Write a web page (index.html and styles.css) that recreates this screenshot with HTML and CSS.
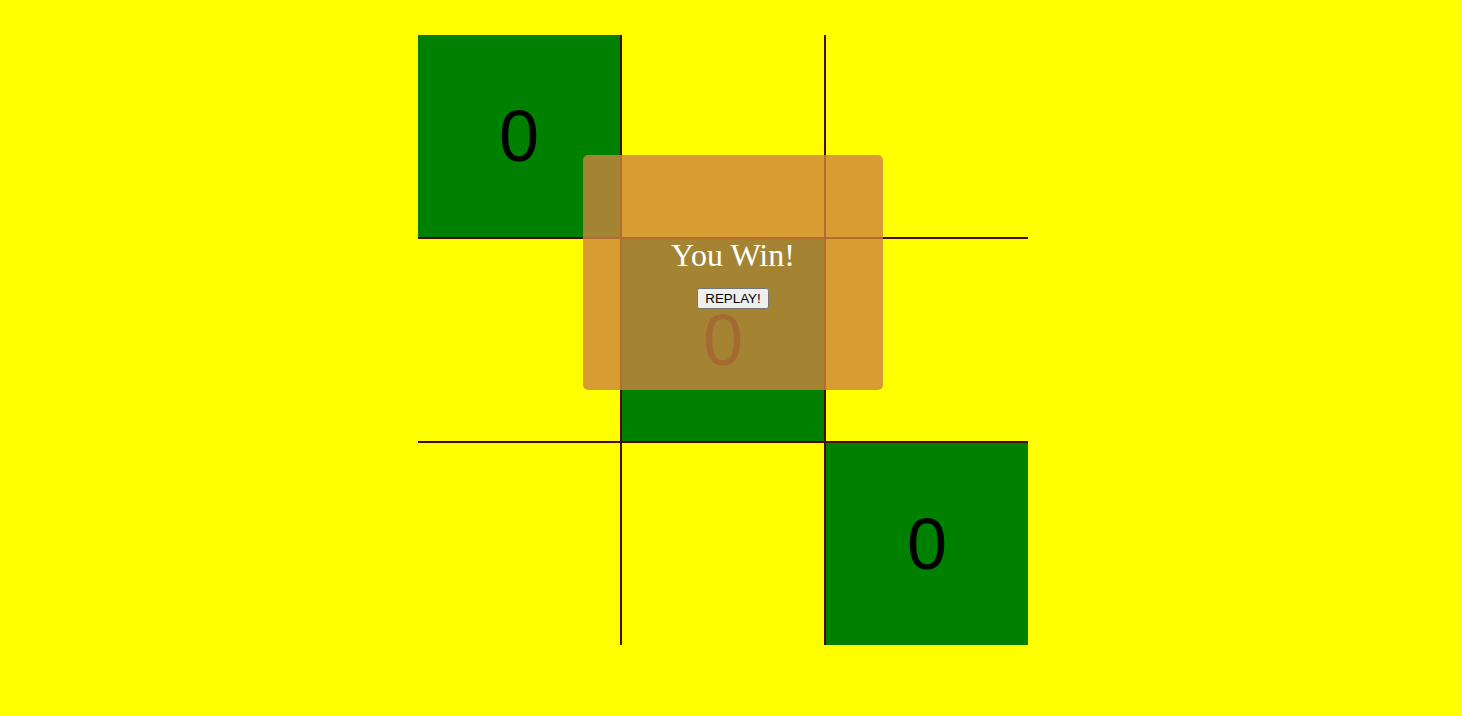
FILE: index.html
```html
<!DOCTYPE html>
<html lang="en">
<head>
<meta charset="utf-8">
<title>Tic Tac Toe</title>
<link rel="stylesheet" href="styles.css">
</head>
<body>
<main class="game">
  <div class="board">
    <div class="cell win">0</div>
    <div class="cell"></div>
    <div class="cell"></div>
    <div class="cell"></div>
    <div class="cell win">0</div>
    <div class="cell"></div>
    <div class="cell"></div>
    <div class="cell"></div>
    <div class="cell win">0</div>
  </div>
  <div class="result">
    <h1 class="result-title">You Win!</h1>
    <button class="replay" type="button">REPLAY!</button>
  </div>
</main>
</body>
</html>
```
FILE: styles.css
```css
html, body {
  margin: 0;
  padding: 0;
  background: #ffff00;
}

body {
  width: 1462px;
  height: 716px;
  overflow: hidden;
}

.game {
  position: relative;
  padding-top: 35px;
}

.board {
  display: grid;
  grid-template-columns: repeat(3, auto);
  width: max-content;
  margin-left: 418px;
}

.cell {
  box-sizing: content-box;
  width: 202px;
  height: 202px;
  display: flex;
  align-items: center;
  justify-content: center;
  font-family: "Liberation Sans", Arial, sans-serif;
  font-size: 72px;
  color: #000;
}

.cell:nth-child(3n+1),
.cell:nth-child(3n+2) {
  border-right: 2px solid rgb(75, 10, 0);
}

.cell:nth-child(-n+6) {
  border-bottom: 2px solid rgb(75, 10, 0);
}

.cell.win {
  background: #008000;
}

.result {
  position: absolute;
  left: 583px;
  top: 155px;
  width: 300px;
  height: 235px;
  border-radius: 5px;
  background: rgba(205, 133, 63, 0.8);
  display: flex;
  flex-direction: column;
  align-items: center;
  justify-content: center;
}

.result-title {
  margin: 0 0 14px;
  font-family: "Liberation Serif", "Times New Roman", serif;
  font-size: 32px;
  font-weight: normal;
  line-height: normal;
  color: #fff;
}

.replay {
  font-family: "Liberation Sans", Arial, sans-serif;
  font-size: 13.333px;
}
```
